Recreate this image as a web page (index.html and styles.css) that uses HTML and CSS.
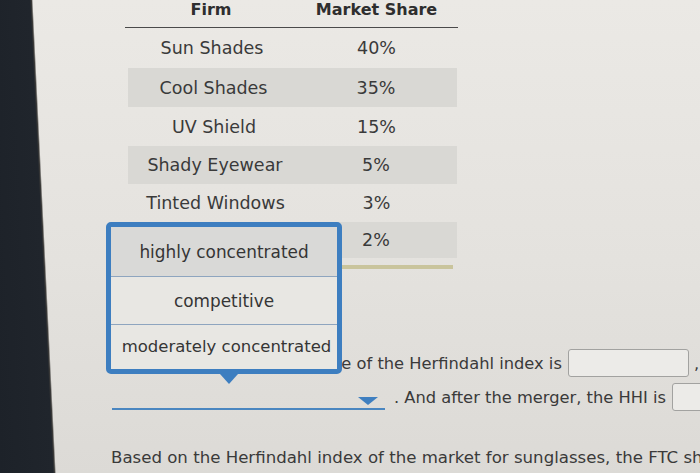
FILE: index.html
```html
<!DOCTYPE html>
<html>
<head>
<meta charset="utf-8">
<link rel="stylesheet" href="styles.css">
</head>
<body>
<div class="screen">
  <div class="page">
    <div class="table">
      <div class="row head"><div>Firm</div><div>Market Share</div></div>
      <div class="row r1"><div>Sun Shades</div><div>40%</div></div>
      <div class="row r2 alt"><div>Cool Shades</div><div>35%</div></div>
      <div class="row r3"><div>UV Shield</div><div>15%</div></div>
      <div class="row r4 alt"><div>Shady Eyewear</div><div>5%</div></div>
      <div class="row r5"><div>Tinted Windows</div><div>3%</div></div>
      <div class="row r6 alt"><div></div><div>2%</div></div>
      <div class="table-end"></div>
    </div>

    <div class="line l1">
      <span class="lead">Before the merger, the value of the Herfindahl index is</span>
      <span class="input in1"></span>
      <span class="comma">,</span>
    </div>
    <div class="line l2">
      <span class="select"><span class="caret"></span></span>
      <span class="after">. And after the merger, the HHI is</span>
      <span class="input in2"></span>
    </div>
    <div class="line l3">Based on the Herfindahl index of the market for sunglasses, the FTC should</div>
  </div>

  <div class="popup">
    <div class="opt sel">highly concentrated</div>
    <div class="opt">competitive</div>
    <div class="opt last">moderately concentrated</div>
  </div>
</div>
</body>
</html>
```

FILE: styles.css
```css
* { box-sizing: border-box; }
html, body { margin: 0; padding: 0; }
body {
  font-family: "DejaVu Sans", Verdana, sans-serif;
  color: #3a3a3a;
}
.screen {
  position: relative;
  width: 700px;
  height: 473px;
  overflow: hidden;
  background:
    linear-gradient(87.2deg, #1d2229 0, #20252c 53px, #3b3a38 54.5px, rgba(230,228,224,0) 56px),
    linear-gradient(180deg, #ebe9e5 0%, #e4e2de 55%, #dcdad6 100%);
}
.page {
  padding-left: 111px;
}
.table {
  margin-left: 14px;
  margin-top: -9px;
  width: 333px;
  font-size: 17.5px;
}
.row {
  display: grid;
  grid-template-columns: 170px 1fr;
  align-items: center;
  text-align: center;
}
.row.head {
  height: 37px;
  font-weight: bold;
  font-size: 16px;
  color: #2e2e2e;
  border-bottom: 1.5px solid #4a4a4a;
}
.row.head div:first-child { padding-left: 2px; }
.row.alt {
  background: #d9d8d4;
  margin: 0 1px 0 3px;
  grid-template-columns: 167px 1fr;
}
.r1 { height: 40px; }
.r2 { height: 39px; }
.r3 { height: 39px; }
.r4 { height: 38px; }
.r5 { height: 38px; }
.r6 { height: 36px; }
.r1 div:first-child { padding-left: 4px; }
.r2 div:first-child { padding-left: 4px; }
.r3 div:first-child { padding-left: 8px; }
.r4 div:first-child { padding-left: 7px; }
.r5 div:first-child { padding-left: 11px; }
.table-end {
  margin-top: 7px;
  height: 4px;
  background: #c9c49c;
  margin-right: 5px;
  margin-left: 3px;
}

.line {
  display: flex;
  align-items: center;
  font-size: 16.3px;
  height: 34px;
  white-space: nowrap;
}
.line > span { flex-shrink: 0; }
.l1 { margin-top: 77px; }
.lead { padding-left: 4px; }
.input {
  display: inline-block;
  height: 28px;
  border: 1.5px solid #a2a2a0;
  border-radius: 3px;
  background: #ecebe8;
}
.in1 { width: 121px; margin-left: 6px; }
.comma { margin-left: 5px; }
.select {
  position: relative;
  width: 273px;
  height: 26px;
  margin-left: 1px;
  border-bottom: 2px solid #4a86c0;
}
.caret {
  position: absolute;
  right: 7px;
  top: 13px;
  width: 0;
  height: 0;
  border-left: 10px solid transparent;
  border-right: 10px solid transparent;
  border-top: 8px solid #3f7fc0;
}
.after { margin-left: 9px; }
.in2 { width: 40px; margin-left: 6px; }
.l3 { margin-top: 26px; font-size: 16.6px; }

.popup {
  position: absolute;
  left: 106px;
  top: 222px;
  width: 236px;
  height: 152px;
  border: 5px solid #3d7ec0;
  border-radius: 5px;
  background: #e8e7e3;
  display: flex;
  flex-direction: column;
  font-size: 16.9px;
  color: #353535;
}
.popup::after {
  content: "";
  position: absolute;
  left: 109px;
  bottom: -15px;
  border-left: 9px solid transparent;
  border-right: 9px solid transparent;
  border-top: 10px solid #3d7ec0;
}
.opt {
  display: flex;
  align-items: center;
  justify-content: center;
  height: 48px;
  border-bottom: 1.5px solid #8ea5bf;
}
.opt.sel { background: #d9d9d7; height: 50px; }
.opt.last { border-bottom: none; height: 44px; font-size: 16.5px; padding: 0 0 2px 5px; }
```
